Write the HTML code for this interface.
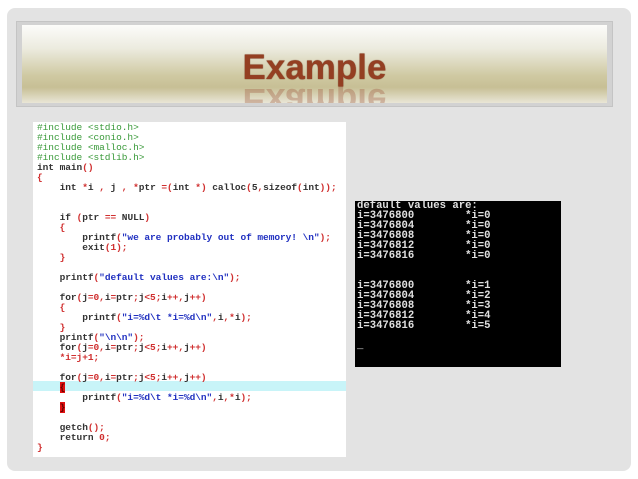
<!DOCTYPE html>
<html><head><meta charset="utf-8"><style>
*{margin:0;padding:0;box-sizing:border-box}
body{width:638px;height:479px;background:#fff;position:relative;overflow:hidden;font-family:"Liberation Sans",sans-serif}
.panel{position:absolute;left:7px;top:8px;width:624px;height:463px;background:#e3e3e3;border-radius:8px}
.tb{position:absolute;left:16px;top:21px;width:597px;height:86px;background:#d2d2d2;border:1px solid #c4c4c4}
.ti{position:absolute;left:22px;top:25px;width:585px;height:78px;background:linear-gradient(#fcfcfa 0%,#ecebdf 30%,#cfc9a2 65%,#c7bf95 80%,#e9e6d6 100%);overflow:hidden}
.t1{position:absolute;left:0;width:585px;text-align:center;top:25px;font-size:35px;font-weight:bold;color:#943f22;line-height:35px;text-shadow:0 0 1px #5a1a08}
.t2{position:absolute;left:0;width:585px;text-align:center;top:58px;font-size:35px;font-weight:bold;color:#a05a40;line-height:35px;transform:scaleY(-1);opacity:.35}
.code{position:absolute;left:33px;top:122px;width:313px;height:335px;background:#fff}
.code pre{position:absolute;left:4px;top:1px;font-family:"Liberation Mono",monospace;font-size:9.5px;line-height:10px;color:#333;font-weight:bold;letter-spacing:-0.05px}
.g{color:#3a9a3a;font-weight:normal}.r{color:#d03030}.b{color:#2030c0}
.hl{position:absolute;left:0;top:259px;width:313px;height:10px;background:#c8f4f8}
.term{position:absolute;left:355px;top:201px;width:206px;height:166px;background:#000}
.term pre{position:absolute;left:2px;top:0px;font-family:"Liberation Mono",monospace;font-size:10.6px;line-height:10px;color:#e0e0e0;font-weight:bold}
.rb{background:#e01010;color:#600}
</style></head><body>
<div class="panel"></div>
<div class="tb"></div>
<div class="ti"><div class="t2">Example</div><div class="t1">Example</div></div>
<div class="code"><div class="hl"></div><pre><span class="g">#include &lt;stdio.h&gt;
#include &lt;conio.h&gt;
#include &lt;malloc.h&gt;
#include &lt;stdlib.h&gt;</span>
int main<span class="r">()</span>
<span class="r">{</span>
    int <span class="r">*</span>i <span class="r">,</span> j <span class="r">,</span> <span class="r">*</span>ptr <span class="r">=(</span>int <span class="r">*)</span> calloc<span class="r">(</span>5<span class="r">,</span>sizeof<span class="r">(</span>int<span class="r">));</span>


    if <span class="r">(</span>ptr <span class="r">==</span> NULL<span class="r">)</span>
    <span class="r">{</span>
        printf<span class="r">(</span><span class="b">"we are probably out of memory! \n"</span><span class="r">);</span>
        exit<span class="r">(1);</span>
    <span class="r">}</span>

    printf<span class="r">(</span><span class="b">"default values are:\n"</span><span class="r">);</span>

    for<span class="r">(</span>j<span class="r">=0,</span>i<span class="r">=</span>ptr<span class="r">;</span>j<span class="r">&lt;5;</span>i<span class="r">++,</span>j<span class="r">++)</span>
    <span class="r">{</span>
        printf<span class="r">(</span><span class="b">"i=%d\t *i=%d\n"</span><span class="r">,</span>i<span class="r">,*</span>i<span class="r">);</span>
    <span class="r">}</span>
    printf<span class="r">(</span><span class="b">"\n\n"</span><span class="r">);</span>
    for<span class="r">(</span>j<span class="r">=0,</span>i<span class="r">=</span>ptr<span class="r">;</span>j<span class="r">&lt;5;</span>i<span class="r">++,</span>j<span class="r">++)</span>
    <span class="r">*i=j+1;</span>

    for<span class="r">(</span>j<span class="r">=0,</span>i<span class="r">=</span>ptr<span class="r">;</span>j<span class="r">&lt;5;</span>i<span class="r">++,</span>j<span class="r">++)</span>
    <span class="rb">{</span>
        printf<span class="r">(</span><span class="b">"i=%d\t *i=%d\n"</span><span class="r">,</span>i<span class="r">,*</span>i<span class="r">);</span>
    <span class="rb">}</span>

    getch<span class="r">();</span>
    return <span class="r">0;</span>
<span class="r">}</span></pre></div>
<div class="term"><pre>default values are:
i=3476800        *i=0
i=3476804        *i=0
i=3476808        *i=0
i=3476812        *i=0
i=3476816        *i=0


i=3476800        *i=1
i=3476804        *i=2
i=3476808        *i=3
i=3476812        *i=4
i=3476816        *i=5

_</pre></div>
</body></html>
